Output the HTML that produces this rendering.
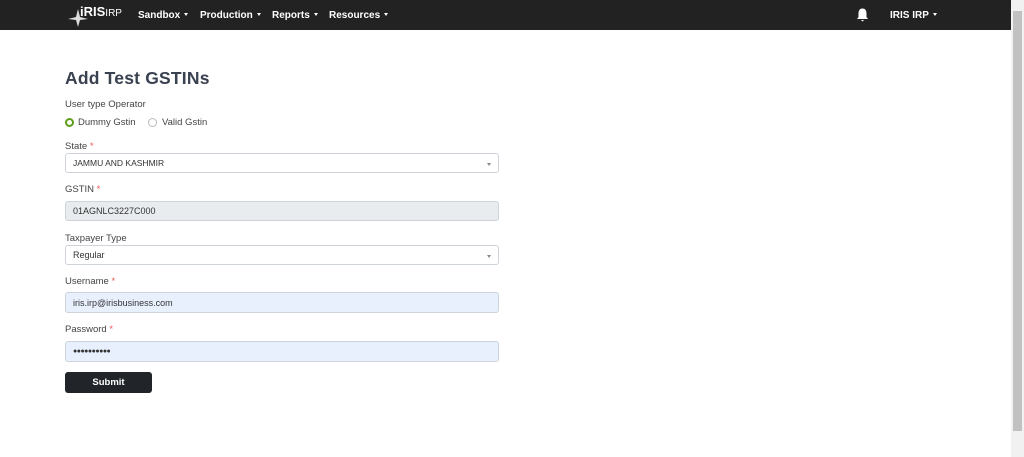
<!DOCTYPE html>
<html><head><style>
*{box-sizing:border-box;margin:0;padding:0}
body{width:1024px;height:457px;overflow:hidden;background:#fff;font-family:"Liberation Sans",sans-serif;color:#333;position:relative}
.nav{position:absolute;left:0;top:0;width:1011px;height:30px;background:#222}
.nav span{position:absolute;top:10px;color:#fff;font-size:10px;font-weight:bold}
.nav span.c:after{content:"";display:inline-block;margin-left:4px;border-left:2.5px solid transparent;border-right:2.5px solid transparent;border-top:3px solid #fff;vertical-align:2px}
.sb{position:absolute;left:1011px;top:0;width:13px;height:457px;background:#f1f1f1}
.sb div{position:absolute;left:2px;top:11px;width:9px;height:420px;background:#c1c1c1}
.t{position:absolute;font-size:9.5px;color:#444}
.r{color:#e55}
.in{position:absolute;left:65px;width:434px;border:1px solid #ced4da;border-radius:3px;font-size:9px;padding-left:7px;color:#333;display:flex;align-items:center}
.sel:after{content:"";position:absolute;right:7px;top:9px;border-left:2.5px solid transparent;border-right:2.5px solid transparent;border-top:3px solid #888}
</style></head><body>
<div class="nav">
<svg style="position:absolute;left:66px;top:5px" width="24" height="22" viewBox="0 0 24 22"><path d="M12 4 L14 12 L22 14 L14 15 L12 22 L10 15 L2 14 L10 12 Z" fill="#ddd"/></svg>
<span style="left:80px;top:4px;font-size:13px">iRIS<span style="position:static;font-weight:normal;font-size:10px">IRP</span></span>
<span class="c" style="left:138px">Sandbox</span>
<span class="c" style="left:200px">Production</span>
<span class="c" style="left:272px">Reports</span>
<span class="c" style="left:329px">Resources</span>
<svg style="position:absolute;left:856px;top:8px" width="13" height="14" viewBox="0 0 13 14"><path d="M6.5 0.5 C3.5 0.5 2.5 3 2.5 5.5 L2.5 9 L1 11 L12 11 L10.5 9 L10.5 5.5 C10.5 3 9.5 0.5 6.5 0.5Z M5 12 L8 12 L6.5 13.5Z" fill="#fff"/></svg>
<span class="c" style="left:890px">IRIS IRP</span>
</div>
<div class="sb"><div></div></div>
<div class="t" style="left:65px;top:68px;font-size:17.5px;color:#3a4150;font-weight:bold;letter-spacing:0.2px">Add Test GSTINs</div>
<div class="t" style="left:65px;top:99px">User type Operator</div>
<div style="position:absolute;left:65px;top:118px;width:9px;height:9px;border:2.5px solid #5a9e1a;border-radius:50%"></div>
<div class="t" style="left:78px;top:117px">Dummy Gstin</div>
<div style="position:absolute;left:148px;top:118px;width:9px;height:9px;border:1px solid #bbb;border-radius:50%"></div>
<div class="t" style="left:162px;top:117px">Valid Gstin</div>
<div class="t" style="left:65px;top:141px">State <span class="r">*</span></div>
<div class="in sel" style="top:153px;height:20px;font-size:8.5px">JAMMU AND KASHMIR</div>
<div class="t" style="left:65px;top:184px">GSTIN <span class="r">*</span></div>
<div class="in" style="top:201px;height:20px;background:#e9ecef">01AGNLC3227C000</div>
<div class="t" style="left:65px;top:233px">Taxpayer Type</div>
<div class="in sel" style="top:245px;height:20px">Regular</div>
<div class="t" style="left:65px;top:276px">Username <span class="r">*</span></div>
<div class="in" style="top:292px;height:21px;background:#e8f0fe">iris.irp@irisbusiness.com</div>
<div class="t" style="left:65px;top:324px">Password <span class="r">*</span></div>
<div class="in" style="top:341px;height:21px;background:#e8f0fe;font-size:7px;letter-spacing:-0.5px">●●●●●●●●●●</div>
<div style="position:absolute;left:65px;top:372px;width:87px;height:21px;background:#212529;border-radius:3px;color:#fff;font-size:9.5px;font-weight:bold;text-align:center;line-height:21px">Submit</div>
</body></html>
